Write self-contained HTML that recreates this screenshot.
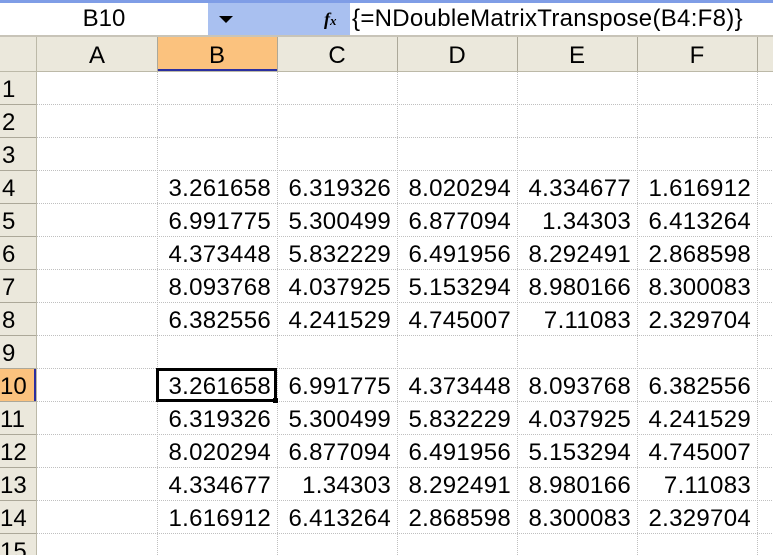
<!DOCTYPE html>
<html><head><style>
*{margin:0;padding:0;box-sizing:border-box}
body{width:773px;height:555px;overflow:hidden;background:#fff;font-family:"Liberation Sans",Arial,sans-serif;position:relative}
.abs{position:absolute}
.t{font-size:24px;color:#000;line-height:33px}
</style></head><body>
<div class="abs" style="left:0;top:0;width:773px;height:3px;background:#7f9de6"></div>
<div class="abs t" style="left:0;top:3px;width:208px;height:32px;text-align:center;line-height:32px">B10</div>
<div class="abs" style="left:208px;top:3px;width:142px;height:32px;background:#a9c0f0"></div>
<div class="abs" style="left:219px;top:16px;width:0;height:0;border-left:7px solid transparent;border-right:7px solid transparent;border-top:7px solid #000"></div>
<div class="abs" style="left:324px;top:7px;font-size:18px;font-style:italic;font-weight:bold;font-family:'Liberation Serif',serif;line-height:24px">f<span style="font-size:13px">x</span></div>
<div class="abs t" style="left:352px;top:3px;line-height:32px;white-space:nowrap;letter-spacing:0.3px">{=NDoubleMatrixTranspose(B4:F8)}</div>
<div class="abs" style="left:0;top:35px;width:773px;height:2px;background:#c8c4b8"></div>
<svg class="abs" style="left:0;top:37px" width="773" height="518">
<rect x="0" y="0" width="773" height="34" fill="#ebe8dc"/>
<rect x="0" y="0" width="36" height="518" fill="#ebe8dc"/>
<rect x="157" y="0" width="120" height="34" fill="#fbc27e"/>
<line x1="157" y1="33" x2="277" y2="33" stroke="#2b2fa0" stroke-width="2"/>
<rect x="0" y="331" width="36" height="33" fill="#fbc27e"/>
<line x1="35" y1="331" x2="35" y2="364" stroke="#2b2fa0" stroke-width="2"/>
<g stroke="#bcb9a8" stroke-width="1">
<line x1="0" y1="34.5" x2="773" y2="34.5"/>
<line x1="36.5" y1="0" x2="36.5" y2="518"/>
</g>
<g stroke="#c0c0c0" stroke-dasharray="1,1">
<line x1="37" y1="67.5" x2="773" y2="67.5"/><line x1="37" y1="100.5" x2="773" y2="100.5"/>
<line x1="37" y1="133.5" x2="773" y2="133.5"/><line x1="37" y1="166.5" x2="773" y2="166.5"/>
<line x1="37" y1="199.5" x2="773" y2="199.5"/><line x1="37" y1="232.5" x2="773" y2="232.5"/>
<line x1="37" y1="265.5" x2="773" y2="265.5"/><line x1="37" y1="298.5" x2="773" y2="298.5"/>
<line x1="37" y1="331.5" x2="773" y2="331.5"/><line x1="37" y1="364.5" x2="773" y2="364.5"/>
<line x1="37" y1="397.5" x2="773" y2="397.5"/><line x1="37" y1="430.5" x2="773" y2="430.5"/>
<line x1="37" y1="463.5" x2="773" y2="463.5"/><line x1="37" y1="496.5" x2="773" y2="496.5"/>
<line x1="157.5" y1="35" x2="157.5" y2="518"/><line x1="277.5" y1="35" x2="277.5" y2="518"/>
<line x1="397.5" y1="35" x2="397.5" y2="518"/><line x1="517.5" y1="35" x2="517.5" y2="518"/>
<line x1="637.5" y1="35" x2="637.5" y2="518"/><line x1="757.5" y1="35" x2="757.5" y2="518"/>
</g>
<g stroke="#aca899">
<line x1="0" y1="67.5" x2="36" y2="67.5"/><line x1="0" y1="100.5" x2="36" y2="100.5"/>
<line x1="0" y1="133.5" x2="36" y2="133.5"/><line x1="0" y1="166.5" x2="36" y2="166.5"/>
<line x1="0" y1="199.5" x2="36" y2="199.5"/><line x1="0" y1="232.5" x2="36" y2="232.5"/>
<line x1="0" y1="265.5" x2="36" y2="265.5"/><line x1="0" y1="298.5" x2="36" y2="298.5"/>
<line x1="0" y1="331.5" x2="36" y2="331.5"/><line x1="0" y1="364.5" x2="36" y2="364.5"/>
<line x1="0" y1="397.5" x2="36" y2="397.5"/><line x1="0" y1="430.5" x2="36" y2="430.5"/>
<line x1="0" y1="463.5" x2="36" y2="463.5"/><line x1="0" y1="496.5" x2="36" y2="496.5"/>
<line x1="157.5" y1="0" x2="157.5" y2="34"/><line x1="277.5" y1="0" x2="277.5" y2="34"/>
<line x1="397.5" y1="0" x2="397.5" y2="34"/><line x1="517.5" y1="0" x2="517.5" y2="34"/>
<line x1="637.5" y1="0" x2="637.5" y2="34"/><line x1="757.5" y1="0" x2="757.5" y2="34"/>
</g>
<rect x="157.5" y="332.5" width="118" height="31" fill="none" stroke="#000" stroke-width="3"/>
<rect x="273" y="361" width="5" height="5" fill="#000"/>
<g font-family="Liberation Sans,Arial,sans-serif" font-size="24" fill="#000" text-anchor="middle">
<text x="97" y="26">A</text><text x="217" y="26">B</text><text x="337" y="26">C</text>
<text x="457" y="26">D</text><text x="577" y="26">E</text><text x="697" y="26">F</text>
</g>
<g font-family="Liberation Sans,Arial,sans-serif" font-size="24" fill="#000">
<text x="2" y="60">1</text><text x="2" y="93">2</text><text x="2" y="126">3</text>
<text x="2" y="159">4</text><text x="2" y="192">5</text><text x="2" y="225">6</text>
<text x="2" y="258">7</text><text x="2" y="291">8</text><text x="2" y="324">9</text>
<text x="0" y="357">10</text><text x="0" y="390">11</text><text x="0" y="423">12</text>
<text x="0" y="456">13</text><text x="0" y="489">14</text><text x="0" y="522">15</text>
</g>
<g font-family="Liberation Sans,Arial,sans-serif" font-size="24" fill="#000" text-anchor="end" letter-spacing="0.3">
<text x="271" y="159">3.261658</text><text x="391" y="159">6.319326</text><text x="511" y="159">8.020294</text><text x="631" y="159">4.334677</text><text x="751" y="159">1.616912</text>
<text x="271" y="192">6.991775</text><text x="391" y="192">5.300499</text><text x="511" y="192">6.877094</text><text x="631" y="192">1.34303</text><text x="751" y="192">6.413264</text>
<text x="271" y="225">4.373448</text><text x="391" y="225">5.832229</text><text x="511" y="225">6.491956</text><text x="631" y="225">8.292491</text><text x="751" y="225">2.868598</text>
<text x="271" y="258">8.093768</text><text x="391" y="258">4.037925</text><text x="511" y="258">5.153294</text><text x="631" y="258">8.980166</text><text x="751" y="258">8.300083</text>
<text x="271" y="291">6.382556</text><text x="391" y="291">4.241529</text><text x="511" y="291">4.745007</text><text x="631" y="291">7.11083</text><text x="751" y="291">2.329704</text>
<text x="271" y="357">3.261658</text><text x="391" y="357">6.991775</text><text x="511" y="357">4.373448</text><text x="631" y="357">8.093768</text><text x="751" y="357">6.382556</text>
<text x="271" y="390">6.319326</text><text x="391" y="390">5.300499</text><text x="511" y="390">5.832229</text><text x="631" y="390">4.037925</text><text x="751" y="390">4.241529</text>
<text x="271" y="423">8.020294</text><text x="391" y="423">6.877094</text><text x="511" y="423">6.491956</text><text x="631" y="423">5.153294</text><text x="751" y="423">4.745007</text>
<text x="271" y="456">4.334677</text><text x="391" y="456">1.34303</text><text x="511" y="456">8.292491</text><text x="631" y="456">8.980166</text><text x="751" y="456">7.11083</text>
<text x="271" y="489">1.616912</text><text x="391" y="489">6.413264</text><text x="511" y="489">2.868598</text><text x="631" y="489">8.300083</text><text x="751" y="489">2.329704</text>
</g>
</svg>
</body></html>
